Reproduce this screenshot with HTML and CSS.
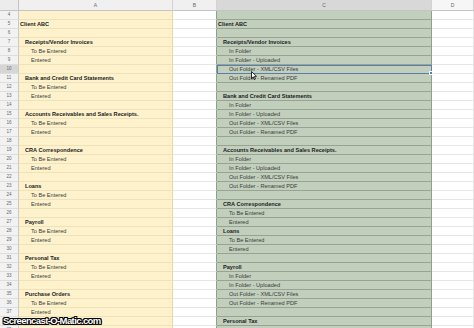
FILE: index.html
```html
<!DOCTYPE html>
<html lang="en">
<head>
  <meta charset="UTF-8">
  <meta name="viewport" content="width=device-width, initial-scale=1.0">
  <title>Client ABC - Sheet</title>
  <link rel="stylesheet" href="styles.css">
</head>
<body>
  <div class="sheet" id="sheet">
    <div class="cell corner"></div>
    <div class="cell hdr">A</div>
    <div class="cell hdr">B</div>
    <div class="cell hdr active">C</div>
    <div class="cell hdr last">D</div>
  </div>

  <svg class="cursor" width="6" height="9" viewBox="0 0 6 9">
    <path d="M0.5 0.5 L0.5 7.5 L2.2 5.9 L3.4 8.5 L4.5 8 L3.3 5.4 L5.5 5.3 Z" fill="#fff" stroke="#000" stroke-width="0.8"/>
  </svg>

  <div class="watermark">Screencast-O-Matic.com</div>

  <script>
    // [text, level] per row, starting at row 4
    const colA = [
      null, ['Client ABC', 'title'], null,
      ['Receipts/Vendor Invoices', 'group'], ['To Be Entered', 'item'], ['Entered', 'item'], null,
      ['Bank and Credit Card Statements', 'group'], ['To Be Entered', 'item'], ['Entered', 'item'], null,
      ['Accounts Receivables and Sales Receipts.', 'group'], ['To Be Entered', 'item'], ['Entered', 'item'], null,
      ['CRA Correspondence', 'group'], ['To Be Entered', 'item'], ['Entered', 'item'], null,
      ['Loans', 'group'], ['To Be Entered', 'item'], ['Entered', 'item'], null,
      ['Payroll', 'group'], ['To Be Entered', 'item'], ['Entered', 'item'], null,
      ['Personal Tax', 'group'], ['To Be Entered', 'item'], ['Entered', 'item'], null,
      ['Purchase Orders', 'group'], ['To Be Entered', 'item'], ['Entered', 'item'], null, null
    ];

    const folders = [
      ['In Folder', 'item'], ['In Folder - Uploaded', 'item'],
      ['Out Folder - XML/CSV Files', 'item'], ['Out Folder - Renamed PDF', 'item']
    ];

    const colC = [
      null, ['Client ABC', 'title'], null,
      ['Receipts/Vendor Invoices', 'group'], ...folders, null,
      ['Bank and Credit Card Statements', 'group'], ...folders, null,
      ['Accounts Receivables and Sales Receipts.', 'group'], ...folders, null,
      ['CRA Correspondence', 'group'], ['To Be Entered', 'item'], ['Entered', 'item'],
      ['Loans', 'group'], ['To Be Entered', 'item'], ['Entered', 'item'], null,
      ['Payroll', 'group'], ...folders, null,
      ['Personal Tax', 'group'], null
    ];

    const selectedRow = 10;
    const sheet = document.getElementById('sheet');

    function makeCell(cls, entry) {
      const div = document.createElement('div');
      div.className = 'cell ' + cls;
      if (entry) {
        div.classList.add(entry[1]);
        div.textContent = entry[0];
      }
      return div;
    }

    colA.forEach((entry, i) => {
      const rowNum = i + 4;
      const num = makeCell('num');
      num.textContent = rowNum;
      if (rowNum === selectedRow) num.classList.add('active');
      sheet.appendChild(num);
      sheet.appendChild(makeCell('col-a', entry));
      sheet.appendChild(makeCell('col-b'));
      const c = makeCell('col-c', colC[i]);
      if (rowNum === selectedRow) c.classList.add('sel');
      sheet.appendChild(c);
      sheet.appendChild(makeCell('col-d'));
    });
  </script>
</body>
</html>
```

FILE: styles.css
```css
html, body {
  margin: 0;
  padding: 0;
  overflow: hidden;
  background: #fff;
}

body {
  font-family: "Liberation Sans", Arial, sans-serif;
  position: relative;
  height: 328px;
}

.sheet {
  display: grid;
  grid-template-columns: 19px 154px 44px 215px 42px;
  grid-template-rows: 11px;
  grid-auto-rows: 9px;
}

.cell {
  box-sizing: border-box;
  position: relative;
  border-right: 1px solid #e6e6e6;
  border-bottom: 1px solid #e6e6e6;
  font-size: 5.6px;
  line-height: 8px;
  white-space: nowrap;
  color: #3a3a3a;
}

.corner {
  background: #ececec;
  border-right-color: #c4c4c4;
  border-bottom-color: #c4c4c4;
}

.hdr {
  background: #f0f0f0;
  border-color: #d2d2d2;
  border-bottom-color: #c4c4c4;
  color: #666;
  text-align: center;
  font-size: 5px;
  line-height: 11px;
}

.hdr.active {
  background: #d8d8d8;
}

.hdr.last {
  background: #f6f6f6;
}

.num {
  background: #f2f2f2;
  border-right-color: #c8c8c8;
  border-bottom-color: #dedede;
  color: #6a6a6a;
  text-align: center;
  font-size: 4.6px;
}

.num.active {
  background: #d6d6d6;
}

.col-a {
  background: #fdf2cc;
  border-right-color: #e4d7ad;
  border-bottom-color: #efe2b8;
}

.col-b {
  border-right-color: #8f9f8b;
}

.col-c {
  background: #c2cfbd;
  border-right-color: #8f9f8b;
  border-bottom-color: #95a591;
}

.title, .group {
  font-weight: bold;
  color: #1c1c1c;
}

.title {
  padding-left: 1px;
}

.group {
  padding-left: 6px;
}

.item {
  padding-left: 12px;
}

.sel {
  z-index: 1;
  outline: 1px solid #5a7fae;
  outline-offset: -1px;
}

.sel::after {
  content: '';
  position: absolute;
  right: -2px;
  bottom: -2px;
  width: 2px;
  height: 2px;
  background: #5a7fae;
  border: 1px solid #fff;
}

.cursor {
  position: absolute;
  left: 251px;
  top: 71px;
  z-index: 2;
}

.watermark {
  position: absolute;
  left: 3px;
  top: 315px;
  z-index: 2;
  font-size: 9.5px;
  line-height: 11px;
  font-weight: bold;
  letter-spacing: -0.6px;
  color: #fff;
  text-shadow: -1px 0 #000, 1px 0 #000, 0 -1px #000, 0 1px #000,
    -1px -1px #000, 1px 1px #000, -1px 1px #000, 1px -1px #000;
}
```
